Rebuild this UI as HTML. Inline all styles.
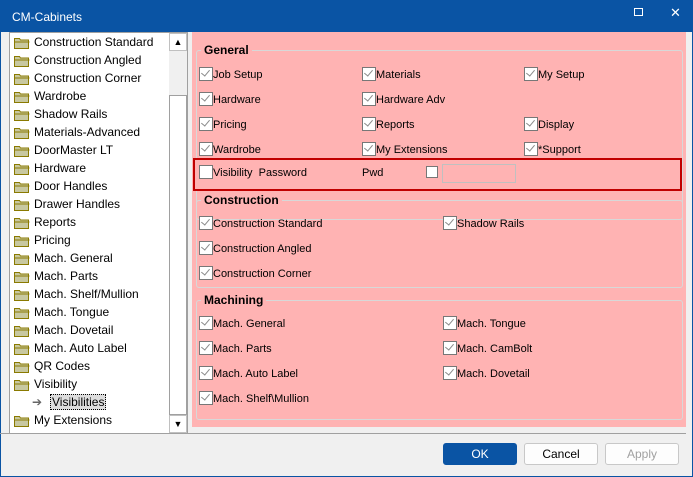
<!DOCTYPE html>
<html><head><style>
*{margin:0;padding:0;box-sizing:border-box}
body{width:693px;height:477px;background:#f0f0f0;font-family:"Liberation Sans",sans-serif;position:relative;overflow:hidden}
.win{position:absolute;left:0;top:0;width:693px;height:477px;border:1px solid #0a54a4}
.title{position:absolute;left:0;top:0;width:693px;height:32px;background:#0a54a4;color:#fff;font-size:12px}
.a{position:absolute}
.tree{left:9px;top:32px;width:179px;height:402px;background:#fff;border:1px solid #a0a0a0}
.ti{position:absolute;left:24px;font-size:12px;color:#000;white-space:nowrap}
.fold{position:absolute;left:4px;width:16px;height:12px}
.pink{left:192px;top:32px;width:494px;height:395px;background:#ffb3b3}
.grp{position:absolute;border:1px solid #d8d8d8;border-radius:3px}
.gl{position:absolute;font-size:12px;font-weight:bold;background:#ffb3b3;padding:0 3px;color:#000}
.cb{position:absolute;font-size:11px;color:#000;white-space:nowrap;padding-left:14px;line-height:13px}
.cb:before{content:"";position:absolute;left:0;top:-2px;width:12px;height:12px;border:1px solid #777;background:#fff}
.cb.c:after{content:"";position:absolute;left:4px;top:-1px;width:4px;height:7px;border:solid #8a8a8a;border-width:0 1.5px 1.5px 0;transform:rotate(40deg)}
.btn{position:absolute;top:443px;width:74px;height:22px;border:1px solid #c8c8c8;border-radius:3px;background:#fdfdfd;font-size:12px;text-align:center;line-height:20px}
</style></head><body>
<div class="win"></div>
<div class="title"><span class="a" style="left:12px;top:10px">CM-Cabinets</span>
<div class="a" style="left:634px;top:8px;width:9px;height:8px;border:1.5px solid #fff"></div>
<span class="a" style="left:670px;top:5px;font-size:13px">✕</span></div>
<div class="a tree">
<div id="items"></div>
<div class="a" style="left:159px;top:0;width:18px;height:400px;background:#f0f0f0"></div>
<div class="a" style="left:159px;top:0;width:18px;height:18px;background:#fff;border:1px solid #c0c0c0;font-size:9px;text-align:center;line-height:16px">▲</div>
<div class="a" style="left:159px;top:62px;width:18px;height:320px;background:#fff;border:1px solid #a0a0a0"></div>
<div class="a" style="left:159px;top:382px;width:18px;height:18px;background:#fff;border:1px solid #c0c0c0;font-size:9px;text-align:center;line-height:16px">▼</div>
</div>
<div class="a" style="left:0;top:433px;width:686px;height:1px;background:#a0a0a0"></div>
<div class="a pink">
<div class="grp" style="left:4px;top:18px;width:487px;height:170px"></div><div class="gl" style="left:9px;top:11px">General</div>
<div class="grp" style="left:4px;top:168px;width:487px;height:88px"></div><div class="gl" style="left:9px;top:161px">Construction</div>
<div class="grp" style="left:4px;top:268px;width:487px;height:120px"></div><div class="gl" style="left:9px;top:261px">Machining</div>
<div class="a" style="left:1px;top:126px;width:489px;height:33px;border:2px solid #c00000;background:#ffb3b3"></div>
<div id="cbs"></div>
<div class="a" style="left:234px;top:134px;width:12px;height:12px;border:1px solid #777;background:#fff"></div>
<div class="a" style="left:250px;top:132px;width:74px;height:19px;border:1px solid #c0c0c0"></div>
<span class="a" style="left:170px;top:135px;font-size:11px">Pwd</span>
</div>
<div class="btn" style="left:443px;background:#0a54a4;color:#fff;border-color:#0a54a4">OK</div>
<div class="btn" style="left:524px">Cancel</div>
<div class="btn" style="left:605px;color:#a0a0a0">Apply</div>
<script>
var t=["Construction Standard","Construction Angled","Construction Corner","Wardrobe","Shadow Rails","Materials-Advanced","DoorMaster LT","Hardware","Door Handles","Drawer Handles","Reports","Pricing","Mach. General","Mach. Parts","Mach. Shelf/Mullion","Mach. Tongue","Mach. Dovetail","Mach. Auto Label","QR Codes","Visibility","Visibilities","My Extensions"],h="";
t.forEach(function(s,i){var y=2+i*18;
if(s=="Visibilities"){h+='<span class="ti" style="left:22px;top:'+y+'px;font-size:12px;color:#666">➔</span><span class="ti" style="left:40px;top:'+(y-1)+'px;background:#ddd;border:1px dotted #000;padding:0 1px">'+s+'</span>';}
else{h+='<svg class="fold" style="top:'+(y+2)+'px" viewBox="0 0 16 12"><path d="M0.5 1.5h5l1 1.5h8v8.5h-14z" fill="#c8c8a0" stroke="#8a7a00"/><path d="M0.5 5h15" stroke="#8a7a00"/></svg><span class="ti" style="top:'+y+'px">'+s+'</span>';}});
document.getElementById("items").innerHTML=h;
var c=[[7,37,"Job Setup"],[170,37,"Materials"],[332,37,"My Setup"],[7,62,"Hardware"],[170,62,"Hardware Adv"],[7,87,"Pricing"],[170,87,"Reports"],[332,87,"Display"],[7,112,"Wardrobe"],[170,112,"My Extensions"],[332,112,"*Support"],
[7,186,"Construction Standard"],[251,186,"Shadow Rails"],[7,211,"Construction Angled"],[7,236,"Construction Corner"],
[7,286,"Mach. General"],[251,286,"Mach. Tongue"],[7,311,"Mach. Parts"],[251,311,"Mach. CamBolt"],[7,336,"Mach. Auto Label"],[251,336,"Mach. Dovetail"],[7,361,"Mach. Shelf\\Mullion"]],g="";
c.forEach(function(a){g+='<div class="cb c" style="left:'+a[0]+'px;top:'+a[1]+'px">'+a[2]+'</div>';});
g+='<div class="cb" style="left:7px;top:135px">Visibility&nbsp; Password</div>';
document.getElementById("cbs").innerHTML=g;
</script>
</body></html>
